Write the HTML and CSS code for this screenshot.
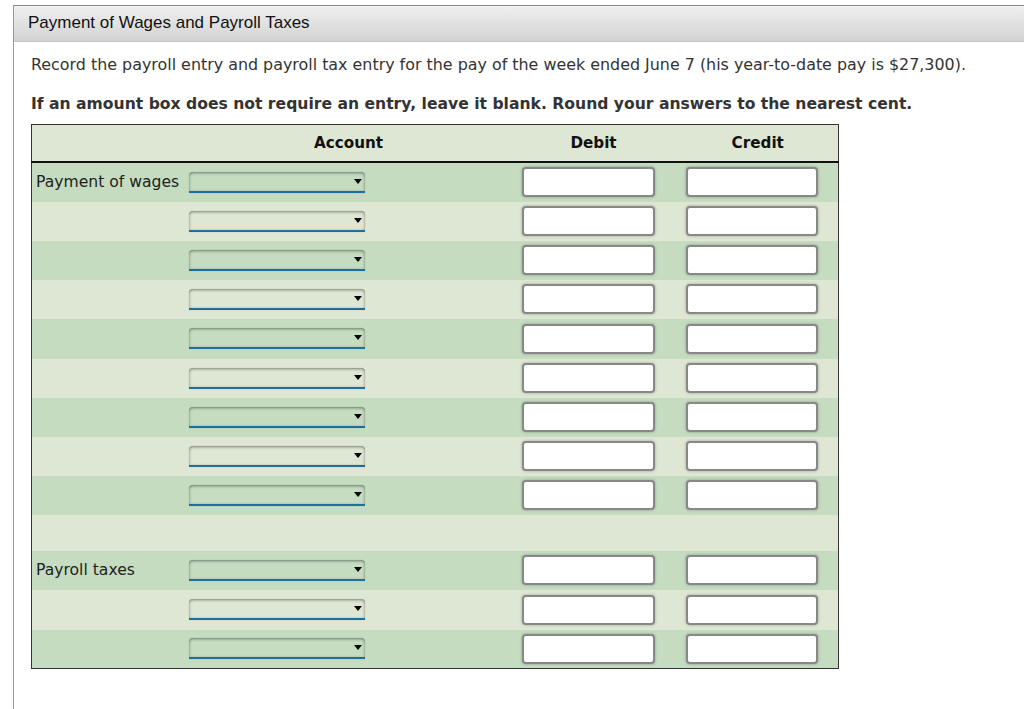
FILE: index.html
```html
<!DOCTYPE html>
<html lang="en">

<head>
    <meta charset="UTF-8">
    <meta name="viewport" content="width=device-width, initial-scale=1.0">
    <title>Payment of Wages and Payroll Taxes</title>
    <link rel="stylesheet" href="styles.css">
</head>

<body>
    <section class="panel">
        <div class="panel-head">Payment of Wages and Payroll Taxes</div>
        <div class="panel-body">
            <p class="intro">Record the payroll entry and payroll tax entry for the pay of the week ended June 7 (his year-to-date pay is $27,300).</p>
            <p class="note">If an amount box does not require an entry, leave it blank. Round your answers to the nearest cent.</p>

            <table class="journal">
                <colgroup>
                    <col class="c-label">
                    <col class="c-account">
                    <col class="c-debit">
                    <col class="c-credit">
                </colgroup>
                <thead>
                    <tr>
                        <th></th>
                        <th>Account</th>
                        <th>Debit</th>
                        <th>Credit</th>
                    </tr>
                </thead>
                <tbody id="rows"></tbody>
            </table>
        </div>
    </section>

    <script>
        // 兩組分錄: 薪資 9 列, 薪資稅 3 列, 中間空一列
        const groups = [
            { label: 'Payment of wages', lines: 9 },
            { label: 'Payroll taxes', lines: 3 }
        ];
        const tbody = document.getElementById('rows');

        function entryRow(label) {
            return `<tr>
                <td class="label">${label}</td>
                <td><div class="dropdown"><select><option></option></select></div></td>
                <td class="debit"><input type="text"></td>
                <td class="credit"><input type="text"></td>
            </tr>`;
        }

        groups.forEach(function (g, gi) {
            if (gi > 0) {
                tbody.innerHTML += '<tr class="spacer"><td colspan="4"></td></tr>';
            }
            for (let i = 0; i < g.lines; i++) {
                tbody.innerHTML += entryRow(i == 0 ? g.label : '');
            }
        });
    </script>
</body>

</html>
```

FILE: styles.css
```css
* {
    box-sizing: border-box;
}

html,
body {
    overflow: hidden;
}

body {
    margin: 5px 0 0 13px;
    background-color: #fff;
    font-family: "DejaVu Sans", Verdana, sans-serif;
    color: #222;
}

.panel {
    width: 100%;
    height: 710px;
    border-left: 1px solid #9a9a9a;
    border-top: 1px solid #8c8c8c;
}

.panel-head {
    height: 36px;
    padding: 7px 0 0 14px;
    font-family: "Liberation Sans", Arial, sans-serif;
    font-size: 17px;
    color: #111;
    background: linear-gradient(#f0f0f0, #d3d3d3);
    border-bottom: 1px solid #c4c4c4;
}

.panel-body {
    padding: 0 0 0 17px;
}

.intro {
    margin: 0;
    padding-top: 13px;
    font-size: 15.9px;
    line-height: 19px;
    color: #333;
}

.note {
    margin: 0;
    padding-top: 21px;
    font-size: 15.6px;
    line-height: 19px;
    font-weight: bold;
    color: #333;
}

.journal {
    margin-top: 10px;
    width: 808px;
    table-layout: fixed;
    border-collapse: collapse;
    border: 1px solid #333;
    font-size: 15.6px;
}

.c-label {
    width: 156px;
}

.c-account {
    width: 322px;
}

.c-debit {
    width: 168px;
}

.journal th {
    height: 37px;
    padding: 0;
    background-color: #dee7d3;
    border-bottom: 2px solid #111;
    color: #111;
    text-align: center;
    font-size: 15.2px;
}

.journal td {
    height: 39px;
    padding: 0;
    vertical-align: middle;
}

.journal tbody tr {
    background-color: #dee7d3;
}

.journal tbody tr:nth-child(odd) {
    background-color: #c5dcc0;
}

.journal tr:first-child td {
    height: 40px;
}

.journal tbody tr:nth-child(5) td,
.journal tbody tr:nth-child(12) td {
    height: 40px;
}

.journal .spacer td {
    height: 36px;
}

.label {
    padding-left: 4px !important;
    white-space: nowrap;
    color: #222;
}

.dropdown {
    position: relative;
    width: 176px;
    margin-left: 1px;
}

.dropdown select {
    display: block;
    width: 100%;
    height: 21px;
    margin: 0;
    appearance: none;
    -webkit-appearance: none;
    background-color: transparent;
    border: none;
    border-bottom: 2px solid #1f6e9d;
    border-radius: 4px 4px 0 0;
    box-shadow: inset 0 1px 3px rgba(0, 0, 0, 0.45), 0 0 1px rgba(0, 0, 0, 0.3);
}

.dropdown::after {
    content: "";
    position: absolute;
    right: 3px;
    top: 7px;
    border-left: 4px solid transparent;
    border-right: 4px solid transparent;
    border-top: 5px solid #000;
}

.journal input {
    display: block;
    height: 30px;
    border: 2px solid #888;
    border-radius: 4px;
    background-color: #fff;
    box-shadow: 0 0 3px rgba(0, 0, 0, 0.3);
}

.debit input {
    width: 133px;
    margin-left: 12px;
}

.credit input {
    width: 132px;
    margin-left: 8px;
}
```
